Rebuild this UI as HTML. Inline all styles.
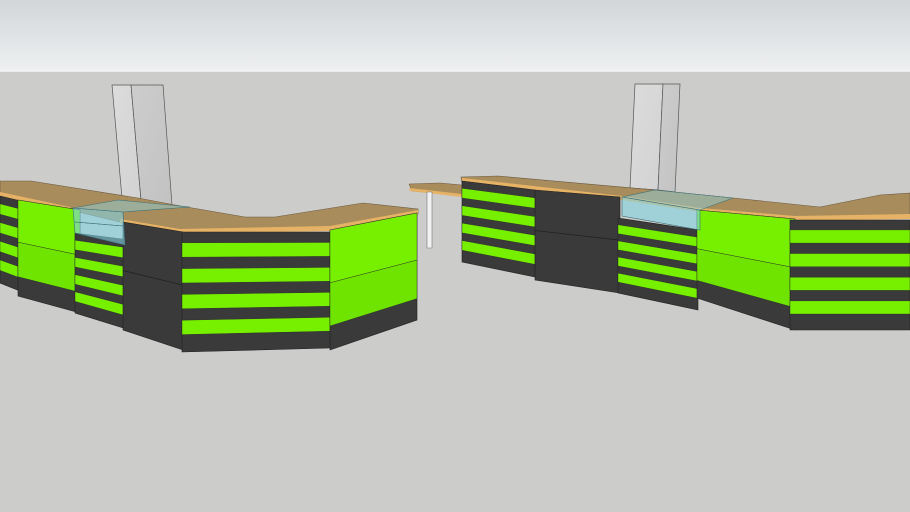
<!DOCTYPE html>
<html><head><meta charset="utf-8"><style>
html,body{margin:0;padding:0;width:910px;height:512px;overflow:hidden;background:#cccccb}
svg{display:block}
</style></head><body>
<svg id="s" width="910" height="512" viewBox="0 0 910 512" xmlns="http://www.w3.org/2000/svg">
<defs>
<linearGradient id="sky" x1="0" y1="0" x2="0" y2="1"><stop offset="0" stop-color="#d2d6d9"/><stop offset="1" stop-color="#eef0f1"/></linearGradient>
<linearGradient id="gl1" x1="0" y1="0" x2="1" y2="1"><stop offset="0" stop-color="#dcdcdc"/><stop offset="1" stop-color="#d2d2d2"/></linearGradient>
<linearGradient id="gl2" x1="0" y1="0" x2="1" y2="1"><stop offset="0" stop-color="#cdcdcd"/><stop offset="1" stop-color="#c2c2c2"/></linearGradient>
</defs>
<rect x="0" y="0" width="910" height="71" fill="url(#sky)"/>
<rect x="0" y="71" width="910" height="441" fill="#cccccb"/>
<line x1="0" y1="71" x2="910" y2="71" stroke="#f4f5f5" stroke-width="1.5"/>
<g id="g"></g>
</svg>
<script>
var g=document.getElementById('g'),o='';
function P(pts,fill,st,sw){o+='<polygon points="'+pts.map(function(p){return p.join(',')}).join(' ')+'" fill="'+fill+'" stroke="'+(st||'none')+'" stroke-width="'+(sw||0.6)+'"/>';}
var D='#3a3a3a',G='#77f000',G2='#6ee400';
function lerp(a,b,t){return a+(b-a)*t}
function sec(L,R,tL,tR,bL,bR,type){
 P([[L,tL],[R,tR],[R,bR],[L,bL]],D,'#222',0.6);
 function band(f1,f2,c){P([[L,lerp(tL,bL,f1)],[R,lerp(tR,bR,f1)],[R,lerp(tR,bR,f2)],[L,lerp(tL,bL,f2)]],c,'#2a2a2a',0.4);}
 if(type=='s'){for(var i=0;i<4;i++){band(0.09+i*0.215,0.21+i*0.215,G);}}
 else if(type=='g'){band(0,0.44,G);band(0.44,0.8,G2);}
 else if(type=='d'){P([[L,lerp(tL,bL,0.45)],[R,lerp(tR,bR,0.45)]],'none','#222',0.8);}
}
// LEFT UNIT
P([[112,85],[131,85],[141,200],[122,198]],'url(#gl1)','#555',0.7);
P([[131,85],[163,85],[172,205],[141,200]],'url(#gl2)','#555',0.7);
P([[0,181],[31,181],[138,198],[175,205],[245,217],[275,217],[363,203],[418,209],[418,214],[330,229],[180,232],[120,222],[70,210],[0,196]],'#a98c5c','#6a5a40',0.6);
P([[0,192],[70,207],[72,211],[0,197]],'#e6b265');
P([[120,219],[180,229],[330,226],[418,210],[418,215],[330,231],[180,234],[120,223]],'#e6b265');
sec(0,25,196,202,283,293,'s');
sec(18,80,200,210,296,313,'g');
sec(75,130,233,240,313,330,'s');
sec(123,183,222,232,330,350,'d');
sec(182,330,232,232,352,348,'s');
sec(330,417,230,213,350,320,'g');
P([[73,208],[123,212],[125,245],[75,233]],'rgba(130,210,225,0.6)','#3a6f78',0.6);
P([[73,208],[118,200],[190,207],[123,212]],'rgba(140,215,230,0.45)','#3a6f78',0.6);
P([[75,222],[123,226]],'none','#3a6f78',0.5);
// RIGHT UNIT
P([[409,184],[440,183],[462,185],[462,196],[412,191]],'#a98c5c','#6a5a40',0.5);
P([[409,188],[462,194],[462,197],[410,191]],'#e6b265');
P([[427,192],[432,192],[432,248],[427,248]],'#f2f2f2','#777',0.6);
P([[635,84],[663,84],[658,190],[630,188]],'url(#gl1)','#555',0.7);
P([[663,84],[680,84],[675,192],[658,190]],'url(#gl2)','#555',0.7);
P([[461,177],[498,176],[655,190],[733,198],[820,207],[880,195],[910,193],[910,218],[795,219],[700,210],[622,198],[462,183]],'#a98c5c','#6a5a40',0.6);
P([[462,178],[622,196],[700,208],[795,216],[910,214],[910,219],[795,221],[700,212],[622,200],[462,183]],'#e6b265');
sec(462,535,181,190,262,277,'s');
sec(535,620,190,197,280,293,'d');
sec(618,698,218,230,293,310,'s');
sec(697,795,210,219,298,330,'g');
sec(790,910,220,220,330,330,'s');
P([[622,197],[700,210],[700,230],[622,216]],'rgba(130,210,225,0.6)','#3a6f78',0.6);
P([[622,197],[655,190],[733,198],[700,210]],'rgba(140,215,230,0.45)','#3a6f78',0.6);
g.innerHTML=o;
</script>
</body></html>
